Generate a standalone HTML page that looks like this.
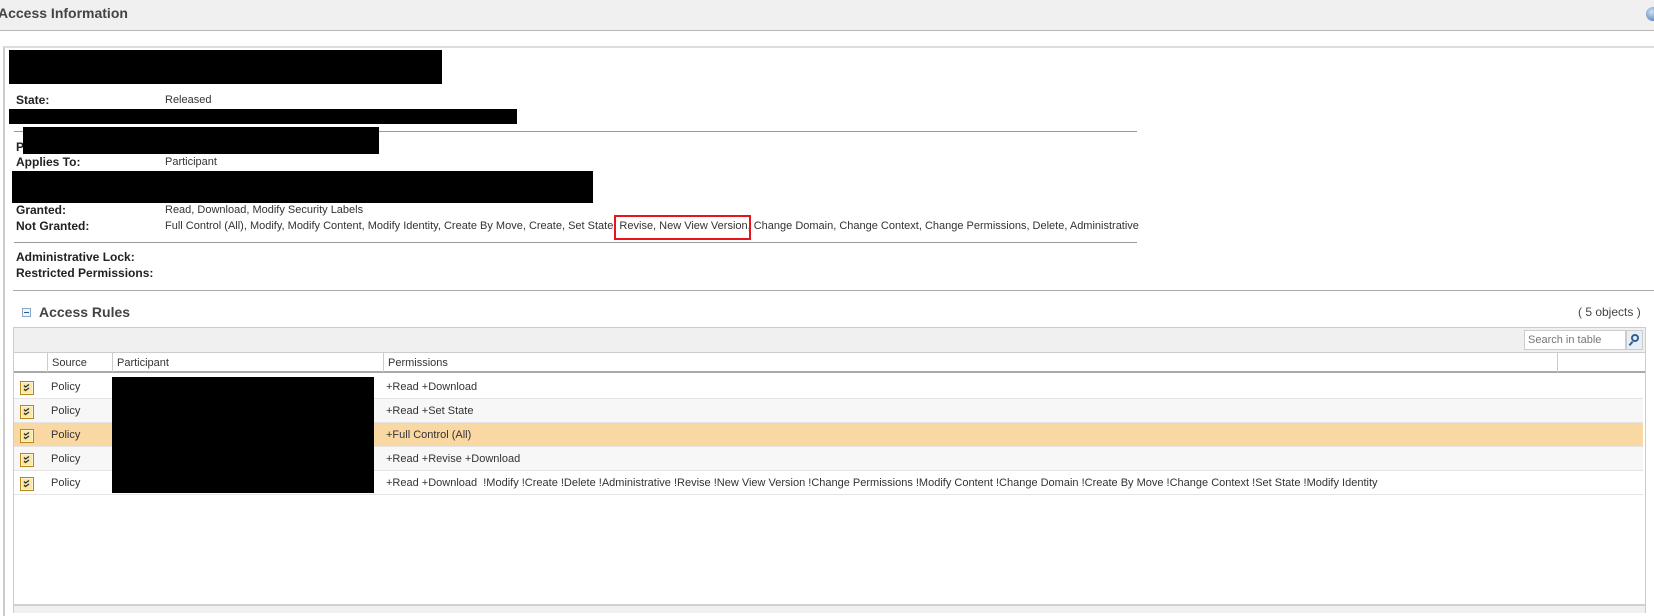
<!DOCTYPE html>
<html><head><meta charset="utf-8"><style>
*{margin:0;padding:0;box-sizing:border-box}
body{width:1654px;height:613px;overflow:hidden;background:#fff;font-family:"Liberation Sans",Arial,sans-serif;color:#333;position:relative}
.a{position:absolute;white-space:nowrap}
.lbl{font-size:12px;color:#222;font-weight:bold;left:16px;line-height:14px}
.val{font-size:11px;color:#333;left:165px;line-height:14px}
.blk{position:absolute;background:#000}
.hr{position:absolute;height:1px;background:#999}
.row{position:absolute;left:14px;width:1629px;height:24px;border-bottom:1px solid #e4e4e4;font-size:11px}
.row span{position:absolute;top:6px}
.ic{position:absolute;left:6px;top:6px}
</style></head><body>
<div class="a" style="left:0;top:0;width:1654px;height:31px;background:#f0f0f0;border-bottom:1px solid #b8b8b8"></div>
<div class="a" style="left:-2px;top:5px;font-size:14px;font-weight:bold;color:#444">Access Information</div>
<div class="a" style="left:1646px;top:7px;width:14px;height:14px;border-radius:50%;background:radial-gradient(circle at 40% 35%,#cfe0f5,#3f6fa8)"></div>

<div class="a" style="left:3px;top:46px;width:1660px;height:570px;border-left:2px solid #ccc;border-top:2px solid #ddd"></div>

<div class="blk" style="left:9px;top:50px;width:433px;height:34px"></div>
<div class="a lbl" style="top:93px">State:</div><div class="a val" style="top:93px">Released</div>
<div class="blk" style="left:9px;top:109px;width:508px;height:15px"></div>
<div class="hr" style="left:14px;top:131px;width:1123px"></div>
<div class="a lbl" style="top:140px">P</div>
<div class="blk" style="left:23px;top:127px;width:356px;height:27px"></div>
<div class="a lbl" style="top:155px">Applies To:</div><div class="a val" style="top:155px">Participant</div>
<div class="blk" style="left:12px;top:171px;width:581px;height:32px"></div>
<div class="a lbl" style="top:203px">Granted:</div><div class="a val" style="top:203px">Read, Download, Modify Security Labels</div>
<div class="a lbl" style="top:219px">Not Granted:</div><div class="a val" style="top:219px">Full Control (All), Modify, Modify Content, Modify Identity, Create By Move, Create, Set State, Revise, New View Version, Change Domain, Change Context, Change Permissions, Delete, Administrative</div>
<div class="a" style="left:614px;top:215px;width:137px;height:25px;border:2px solid #e8141c"></div>
<div class="hr" style="left:14px;top:242px;width:1123px"></div>
<div class="a lbl" style="top:250px">Administrative Lock:</div>
<div class="a lbl" style="top:266px">Restricted Permissions:</div>
<div class="hr" style="left:13px;top:290px;width:1641px;background:#aaa"></div>

<div class="a" style="left:22px;top:308px;width:9px;height:9px;border:1px solid #8aa8c8;background:#eef4fb"></div>
<div class="a" style="left:24px;top:312px;width:5px;height:1px;background:#2d5a8a"></div>
<div class="a" style="left:39px;top:304px;font-size:14px;font-weight:bold;color:#444">Access Rules</div>
<div class="a" style="left:1578px;top:305px;font-size:12px;color:#444">( 5 objects )</div>

<div class="a" style="left:13px;top:327px;width:1633px;height:286px;border:1px solid #ccc;background:#fff"></div>
<div class="a" style="left:14px;top:328px;width:1631px;height:25px;background:#f0f0f0;border-bottom:1px solid #ccc"></div>
<div class="a" style="left:1524px;top:330px;width:102px;height:20px;border:1px solid #ccc;background:#fff;font-size:11px;color:#777;padding:3px 0 0 3px">Search in table</div>
<div class="a" style="left:1626px;top:330px;width:17px;height:20px;border:1px solid #ccc;background:#e8eef5"></div>
<div class="a" style="left:1631px;top:334px;width:8px;height:8px;border:2px solid #2f5f9e;border-radius:50%"></div>
<div class="a" style="left:1630px;top:341px;width:2px;height:5px;background:#2f5f9e;transform:rotate(40deg)"></div>

<div class="a" style="left:14px;top:353px;width:1631px;height:20px;border-bottom:2px solid #aaa;font-size:11px;color:#333">
<div class="a" style="left:33px;top:0;height:19px;border-left:1px solid #ccc;padding:4px 4px">Source</div>
<div class="a" style="left:98px;top:0;height:19px;border-left:1px solid #ccc;padding:4px 4px">Participant</div>
<div class="a" style="left:369px;top:0;height:19px;border-left:1px solid #ccc;padding:4px 4px">Permissions</div>
<div class="a" style="left:1543px;top:0;height:19px;border-left:1px solid #ccc"></div>
</div>

<svg width="0" height="0" style="position:absolute"><defs><symbol id="ck" viewBox="0 0 14 14"><rect x="0.5" y="0.5" width="13" height="13" fill="#f9e9a8" stroke="#b8891a"/><rect x="1.5" y="1.5" width="11" height="11" fill="none" stroke="#fff6d0" stroke-width="0.8"/><path d="M4 4.5l1.5 1.5 3.5-2.5M4 8l1.5 1.5 3.5-2.5" fill="none" stroke="#333" stroke-width="1.3"/></symbol></defs></svg>

<div class="row" style="top:375px;background:#fff"><svg class="ic" width="14" height="14"><use href="#ck"/></svg><span style="left:37px">Policy</span><span style="left:372px">+Read +Download</span></div>
<div class="row" style="top:399px;background:#f7f7f7"><svg class="ic" width="14" height="14"><use href="#ck"/></svg><span style="left:37px">Policy</span><span style="left:372px">+Read +Set State</span></div>
<div class="row" style="top:423px;background:#fad8a4"><svg class="ic" width="14" height="14"><use href="#ck"/></svg><span style="left:37px">Policy</span><span style="left:372px">+Full Control (All)</span></div>
<div class="row" style="top:447px;background:#f7f7f7"><svg class="ic" width="14" height="14"><use href="#ck"/></svg><span style="left:37px">Policy</span><span style="left:372px">+Read +Revise +Download</span></div>
<div class="row" style="top:471px;background:#fff"><svg class="ic" width="14" height="14"><use href="#ck"/></svg><span style="left:37px">Policy</span><span style="left:372px">+Read +Download &nbsp;!Modify !Create !Delete !Administrative !Revise !New View Version !Change Permissions !Modify Content !Change Domain !Create By Move !Change Context !Set State !Modify Identity</span></div>
<div class="blk" style="left:112px;top:377px;width:262px;height:116px"></div>

<div class="a" style="left:14px;top:604px;width:1631px;height:9px;background:#f0f0f0;border-top:2px solid #d0d0d0"></div>
</body></html>
